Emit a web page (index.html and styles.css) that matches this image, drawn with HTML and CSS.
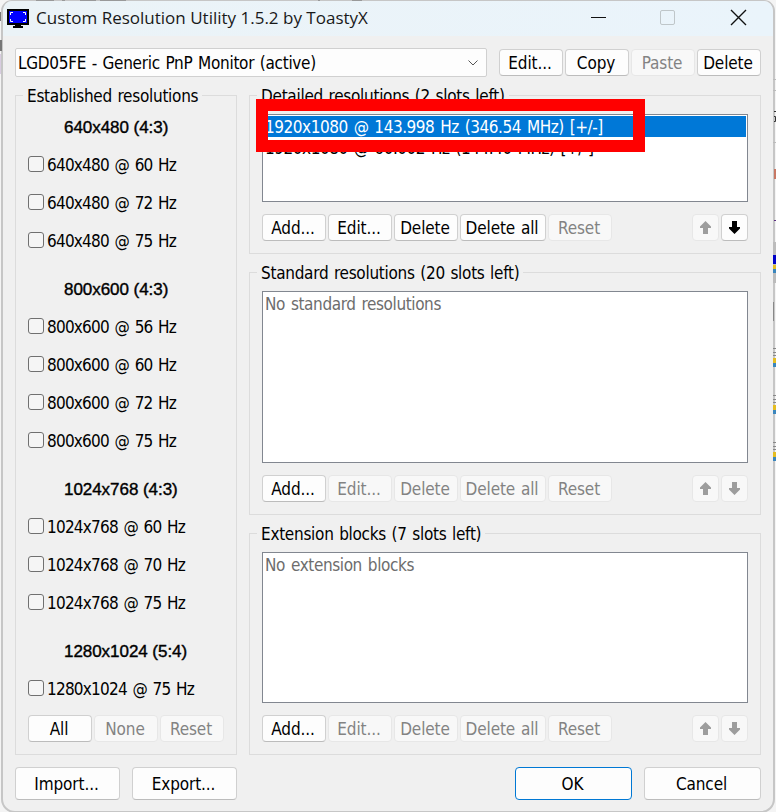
FILE: index.html
```html
<!DOCTYPE html>
<html lang="en">
<head>
<meta charset="utf-8">
<title>Custom Resolution Utility</title>
<link rel="stylesheet" href="styles.css">
</head>
<body>
<div class="window">
  <header class="titlebar">
    <svg class="logo" width="22" height="19" viewBox="0 0 22 19">
      <path fill="#000" d="M0 0h22v16H0zM8 16h6v1h2v2H6v-2h2z"/>
      <path fill="#00f" d="M2 2h18v12H2z"/>
      <path fill="none" stroke="#fff" d="M3.500 6V3.500H6M16 3.500h2.500V6M18.500 10v2.500H16M6 12.500H3.500V10"/>
    </svg>
    <h1 class="title">Custom Resolution Utility 1.5.2 by ToastyX</h1>
    <svg class="caption" width="156" height="18" viewBox="0 0 156 18" fill="none">
      <path stroke="#111" d="M0 8.500h15"/>
      <rect x="69.500" y="1.500" width="14" height="14" rx="1.500" stroke="#bfc6c9"/>
      <path stroke="#111" stroke-width="1.400" d="M140 1l15 15M155 1l-15 15"/>
    </svg>
  </header>

  <main class="content">
    <div class="monitor">
      <div class="combo"><span>LGD05FE - Generic PnP Monitor (active)</span>
        <svg width="10" height="6" viewBox="0 0 10 6"><path d="M.5.5 5 5 9.500.5" fill="none" stroke="#555"/></svg>
      </div>
      <div class="row">
        <button class="btn">Edit...</button><button class="btn">Copy</button><button class="btn" disabled>Paste</button><button class="btn">Delete</button>
      </div>
    </div>

    <div class="columns">
      <section class="group left">
        <h2 class="legend">Established resolutions</h2>
        <h3>640x480 (4:3)</h3>
        <label><i class="box"></i>640x480 @ 60 Hz</label>
        <label><i class="box"></i>640x480 @ 72 Hz</label>
        <label><i class="box"></i>640x480 @ 75 Hz</label>
        <h3>800x600 (4:3)</h3>
        <label><i class="box"></i>800x600 @ 56 Hz</label>
        <label><i class="box"></i>800x600 @ 60 Hz</label>
        <label><i class="box"></i>800x600 @ 72 Hz</label>
        <label><i class="box"></i>800x600 @ 75 Hz</label>
        <h3>1024x768 (4:3)</h3>
        <label><i class="box"></i>1024x768 @ 60 Hz</label>
        <label><i class="box"></i>1024x768 @ 70 Hz</label>
        <label><i class="box"></i>1024x768 @ 75 Hz</label>
        <h3>1280x1024 (5:4)</h3>
        <label><i class="box"></i>1280x1024 @ 75 Hz</label>
        <div class="row left-actions">
          <button class="btn">All</button><button class="btn" disabled>None</button><button class="btn" disabled>Reset</button>
        </div>
      </section>

      <div class="right">
        <section class="group detailed">
          <h2 class="legend">Detailed resolutions (2 slots left)</h2>
          <div class="list">
            <div class="item selected">1920x1080 @ 143.998 Hz (346.54 MHz) [+/-]</div>
            <div class="item">1920x1080 @ 60.002 Hz (144.40 MHz) [+/-]</div>
          </div>
          <div class="row">
            <button class="btn">Add...</button><button class="btn">Edit...</button><button class="btn">Delete</button><button class="btn wide">Delete all</button><button class="btn" disabled>Reset</button>
            <span class="spacer"></span>
            <button class="btn arrow" disabled><svg width="11" height="13" viewBox="0 0 11 13"><path d="M5.500 0 11 5.500V7H8v6H3V7H0V5.500z"/></svg></button><button class="btn arrow"><svg width="11" height="13" viewBox="0 0 11 13"><path d="M5.500 13 0 7.500V6h3V0h5v6h3v1.500z"/></svg></button>
          </div>
          <div class="marker"></div>
        </section>

        <section class="group standard">
          <h2 class="legend">Standard resolutions (20 slots left)</h2>
          <div class="list"><div class="item empty">No standard resolutions</div></div>
          <div class="row">
            <button class="btn">Add...</button><button class="btn" disabled>Edit...</button><button class="btn" disabled>Delete</button><button class="btn wide" disabled>Delete all</button><button class="btn" disabled>Reset</button>
            <span class="spacer"></span>
            <button class="btn arrow" disabled><svg width="11" height="13" viewBox="0 0 11 13"><path d="M5.500 0 11 5.500V7H8v6H3V7H0V5.500z"/></svg></button><button class="btn arrow" disabled><svg width="11" height="13" viewBox="0 0 11 13"><path d="M5.500 13 0 7.500V6h3V0h5v6h3v1.500z"/></svg></button>
          </div>
        </section>

        <section class="group extension">
          <h2 class="legend">Extension blocks (7 slots left)</h2>
          <div class="list"><div class="item empty">No extension blocks</div></div>
          <div class="row">
            <button class="btn">Add...</button><button class="btn" disabled>Edit...</button><button class="btn" disabled>Delete</button><button class="btn wide" disabled>Delete all</button><button class="btn" disabled>Reset</button>
            <span class="spacer"></span>
            <button class="btn arrow" disabled><svg width="11" height="13" viewBox="0 0 11 13"><path d="M5.500 0 11 5.500V7H8v6H3V7H0V5.500z"/></svg></button><button class="btn arrow" disabled><svg width="11" height="13" viewBox="0 0 11 13"><path d="M5.500 13 0 7.500V6h3V0h5v6h3v1.500z"/></svg></button>
          </div>
        </section>
      </div>
    </div>

    <footer class="footer">
      <button class="btn big">Import...</button><button class="btn big">Export...</button>
      <span class="spacer"></span>
      <button class="btn huge primary">OK</button><button class="btn huge">Cancel</button>
    </footer>
  </main>
</div>
<svg class="edges" width="776" height="812" viewBox="0 0 776 812" aria-hidden="true">
  <path fill="#999" d="M36 0h18v1H36zM62 0h3v1h-3zM80 0h16v1H80zM100 0h26v1h-26zM318 0h2v1h-2zM352 0h10v1h-10z"/>
  <path fill="#777" d="M0 12h1v9H0zM0 40h2v11H0z"/>
  <path fill="#d8cce0" d="M0 54h1v20H0z"/>
  <path fill="#bbb" d="M773 79h3v1h-3zM773 90h3v1h-3zM773 142h3v1h-3z"/>
  <path fill="none" stroke="#333" d="M776 111.500h-2M774 116.500h1.500v5H774"/>
  <path fill="#c87864" d="M774 169h2v10h-2z"/>
  <path fill="#5a2d82" d="M774 220h2v1h-2z"/>
  <path fill="#bcbcbc" d="M773 242h3v41h-3z"/>
  <path fill="#0000c8" d="M773 255h3v9h-3z"/>
  <path fill="#e4bd22" d="M773 265h3v5h-3zM773 358h3v5h-3zM773 405h3v5h-3zM773 452h3v5h-3z"/>
  <path fill="#3a86bd" d="M773 269h3v4h-3zM773 363h3v4h-3zM773 410h3v4h-3zM773 457h3v4h-3z"/>
  <path fill="#888" d="M773 302h1v19h-1zM773 348h3v1h-3zM773 352h3v1h-3zM773 355h3v1h-3zM773 395h3v1h-3zM773 399h3v1h-3zM773 402h3v1h-3zM773 442h3v1h-3zM773 446h3v1h-3zM773 449h3v1h-3z"/>
</svg>
</body>
</html>
```

FILE: styles.css
```css
* { box-sizing: border-box; }
body {
  margin: 0;
  width: 776px;
  height: 812px;
  overflow: hidden;
  background: #f4f4f4;
  color: #000;
  font: 17px/20px "DejaVu Sans Condensed", "DejaVu Sans", sans-serif;
  font-stretch: condensed;
  letter-spacing: -0.28px;
  word-spacing: 1px;
  white-space: nowrap;
}
h1, h2, h3 { margin: 0; font: inherit; }
.edges { position: absolute; left: 0; top: 0; }
.window {
  position: relative;
  margin-left: 1px;
  width: 774px;
  height: 813px;
  border: 2px solid #c6c6c6;
  border-top-width: 1px;
  border-radius: 11px 11px 14px 14px;
  background: #f0f0f0;
  overflow: hidden;
}
.titlebar {
  display: flex;
  align-items: flex-start;
  height: 35px;
  padding: 8px 0 0 4px;
  background: linear-gradient(90deg, #ebf3f7, #eaf4fb);
}
.title {
  margin: -1px 0 0 7px;
  width: 334px;
  font: 17px/20px "Open Sans", sans-serif;
  letter-spacing: 0;
  word-spacing: 0;
  color: #191919;
}
.caption { margin-left: 221px; }
.content { padding: 12px 12px 0 12px; }
.monitor { display: flex; justify-content: space-between; align-items: center; height: 29px; }
.combo {
  display: flex;
  align-items: center;
  justify-content: space-between;
  width: 472px;
  height: 29px;
  padding: 0 8px 0 2px;
  border: 1px solid #d0d0d0;
  border-radius: 2px;
  background: #fdfdfd;
}
.row { display: flex; gap: 2px; }
.spacer { flex: 1; }
.btn {
  display: flex;
  align-items: center;
  justify-content: center;
  width: 64px;
  height: 27px;
  padding: 0 2px 0 0;
  border: 1px solid #d0d0d0;
  border-bottom-color: #bcbcbc;
  border-radius: 4px;
  background: #fdfdfd;
  color: #000;
  font: inherit;
  letter-spacing: -0.1px;
  word-spacing: inherit;
  fill: #000;
}
.btn:disabled { border-color: #e7e7e7; background: #f8f8f8; color: #838383; fill: #9d9d9d; }
.wide { width: 86px; }
.arrow { width: 27px; padding: 0; }
.columns { display: flex; justify-content: space-between; margin-top: 18px; }
.group { position: relative; border: 1px solid #dcdcdc; padding: 0 12px; }
.left { width: 222px; height: 660px; }
.right { display: flex; flex-direction: column; gap: 18px; width: 512px; }
.legend { width: fit-content; height: 20px; margin: -10px 0 0 -5px; padding: 0 4px; background: #f0f0f0; }
h3 {
  height: 38px;
  padding-left: 36px;
  font: 17px/38px "Liberation Sans", sans-serif;
  letter-spacing: -0.05px;
  word-spacing: 0;
  -webkit-text-stroke: 0.4px #000;
}
.legend + h3 { margin-top: 3px; }
label + h3 { margin-top: 10px; }
label { display: flex; align-items: center; height: 38px; padding-bottom: 2px; gap: 3px; letter-spacing: -0.78px; word-spacing: 1.5px; }
.box { width: 16px; height: 16px; margin-top: -2px; border: 1px solid #707070; border-radius: 3px; background: #f5f5f5; }
.left-actions { margin-top: 6px; }
.detailed { height: 159px; }
.standard { height: 243px; }
.extension { height: 222px; }
.list { border: 1px solid #828790; background: #fff; padding: 1px; margin-bottom: 12px; }
.detailed .list { height: 88px; margin-top: 8px; }
.standard .list { height: 172px; margin-top: 8px; }
.extension .list { height: 151px; margin-top: 8px; }
.item { height: 21px; line-height: 23px; padding-left: 1px; letter-spacing: -0.46px; word-spacing: 1.5px; }
.selected { background: #0078d7; color: #fff; }
.empty { color: #6d6d6d; letter-spacing: -0.4px; }
.marker { position: absolute; left: 6px; top: 3px; width: 389px; height: 53px; border: 12px solid #f00; }
.footer { display: flex; gap: 12px; margin-top: 12px; }
.footer .spacer { margin: 0 -12px; }
.big { width: 105px; height: 33px; }
.huge { width: 117px; height: 33px; }
.primary { border-color: #0078d4; }
```
